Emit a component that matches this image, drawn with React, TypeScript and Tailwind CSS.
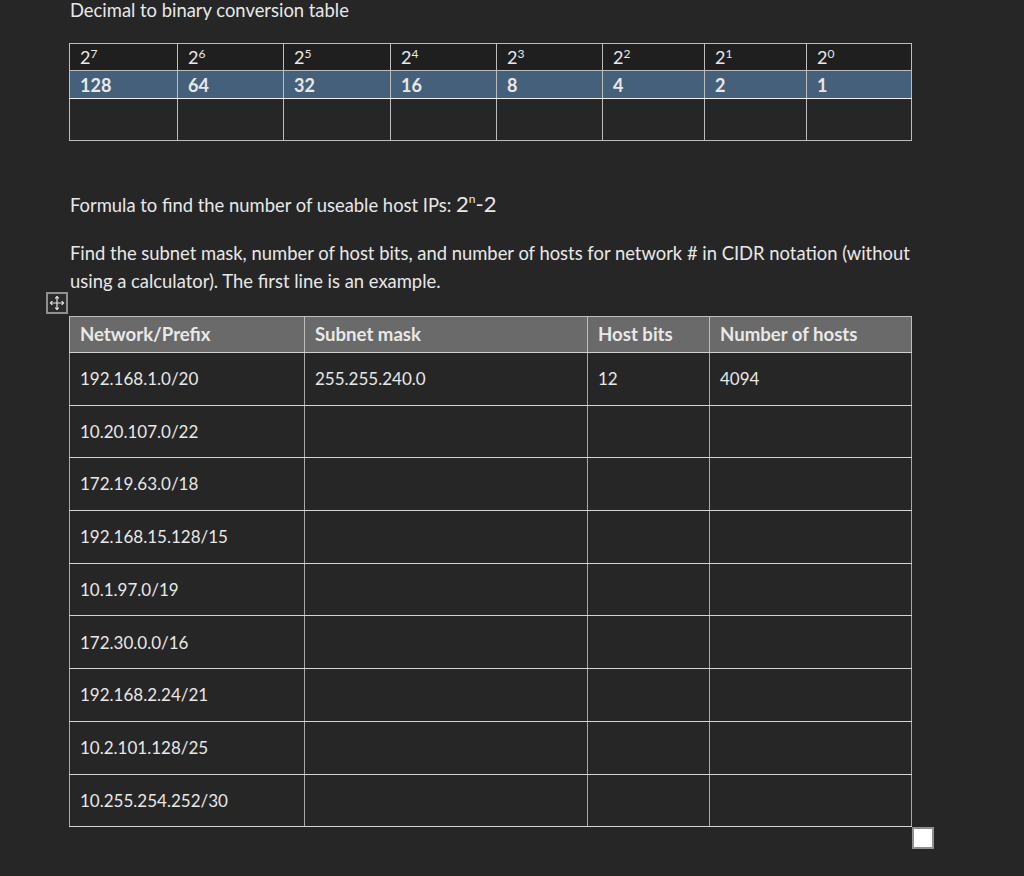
import React from 'react'

const powers = [7, 6, 5, 4, 3, 2, 1, 0]
const colW = ['w-[108px]', 'w-[106px]', 'w-[107px]', 'w-[106px]', 'w-[106px]', 'w-[102px]', 'w-[102px]', 'w-[105px]']

const networks = [
  { net: '192.168.1.0/20', mask: '255.255.240.0', bits: '12', hosts: '4094' },
  { net: '10.20.107.0/22' },
  { net: '172.19.63.0/18' },
  { net: '192.168.15.128/15' },
  { net: '10.1.97.0/19' },
  { net: '172.30.0.0/16' },
  { net: '192.168.2.24/21' },
  { net: '10.2.101.128/25' },
  { net: '10.255.254.252/30' },
]

function MoveHandle() {
  return (
    <div className="w-[22px] h-[22px] border-2 border-[#8f8f8f] bg-[#2b2b2b] flex items-center justify-center">
      <svg width="16" height="16" viewBox="0 0 16 16" fill="none" stroke="#e8e8e8" strokeWidth="1.2">
        <path d="M8 1.5v13M1.5 8h13" />
        <path d="M6.2 3.3 8 1.5l1.8 1.8M6.2 12.7 8 14.5l1.8-1.8M3.3 6.2 1.5 8l1.8 1.8M12.7 6.2 14.5 8l-1.8 1.8" />
      </svg>
    </div>
  )
}

export default function App() {
  return (
    <div className="w-[1024px] h-[876px] bg-[#262626] text-[#e8e8e8] overflow-hidden" style={{ fontFamily: 'Lato, "Open Sans", sans-serif' }}>
      <div className="pl-[69px]">
        <p className="text-[18.4px] leading-[20px] pl-[1px]">Decimal to binary conversion table</p>

        {/* binary table */}
        <table className="mt-[23px] border-collapse text-[18px]">
          <tbody>
            <tr className="h-[27px] bg-[#1f1f1f]">
              {powers.map((p, i) => (
                <td key={p} className={`${colW[i]} border border-[#bdbdbd] px-[10px] leading-[22px]`}>
                  2<sup className="text-[12px]">{p}</sup>
                </td>
              ))}
            </tr>
            <tr className="h-[28px] bg-[#44607a]">
              {powers.map((p) => (
                <td key={p} className="border border-[#bdbdbd] border-t-[#d6d6d6] border-b-[#f0f0f0] px-[10px] font-bold leading-[22px]">
                  {2 ** p}
                </td>
              ))}
            </tr>
            <tr className="h-[42px]">
              {powers.map((p) => (
                <td key={p} className="border border-[#bdbdbd]" />
              ))}
            </tr>
          </tbody>
        </table>

        <p className="mt-[49px] text-[18.4px] leading-[28px] pl-[1px]">
          Formula to find the number of useable host IPs: <span className="text-[22px]">2<sup className="text-[12px] -top-[0.75em]">n</sup>-2</span>
        </p>

        <p className="mt-[20px] text-[18.4px] leading-[28px] pl-[1px] w-[850px]">
          Find the subnet mask, number of host bits, and number of hosts for network # in CIDR notation (without using a calculator). The first line is an example.
        </p>

        <div className="-ml-[23px] -mt-[3px]">
          <MoveHandle />
        </div>

        {/* subnet table */}
        <table className="mt-[2px] border-collapse text-[17px]">
          <thead>
            <tr className="h-[36px] bg-[#6a6a6a] font-bold text-[18.6px]">
              <td className="w-[235px] border border-[#bdbdbd] border-b-[#d0d0d0] px-[10px]">Network/Prefix</td>
              <td className="w-[283px] border border-[#bdbdbd] border-b-[#d0d0d0] px-[10px]">Subnet mask</td>
              <td className="w-[122px] border border-[#bdbdbd] border-b-[#d0d0d0] px-[10px]">Host bits</td>
              <td className="w-[202px] border border-[#bdbdbd] border-b-[#d0d0d0] px-[10px]">Number of hosts</td>
            </tr>
          </thead>
          <tbody>
            {networks.map((n) => (
              <tr key={n.net} className="h-[52.7px]">
                <td className="border border-[#a8a8a8] border-b-[#d4d4d4] px-[10px]">{n.net}</td>
                <td className="border border-[#a8a8a8] border-b-[#d4d4d4] px-[10px]">{n.mask ?? ''}</td>
                <td className="border border-[#a8a8a8] border-b-[#d4d4d4] px-[10px]">{n.bits ?? ''}</td>
                <td className="border border-[#a8a8a8] border-b-[#d4d4d4] px-[10px]">{n.hosts ?? ''}</td>
              </tr>
            ))}
          </tbody>
        </table>

        <div className="ml-[843px] w-[22px] h-[22px] border-2 border-[#8f8f8f] bg-white" />
      </div>
    </div>
  )
}
